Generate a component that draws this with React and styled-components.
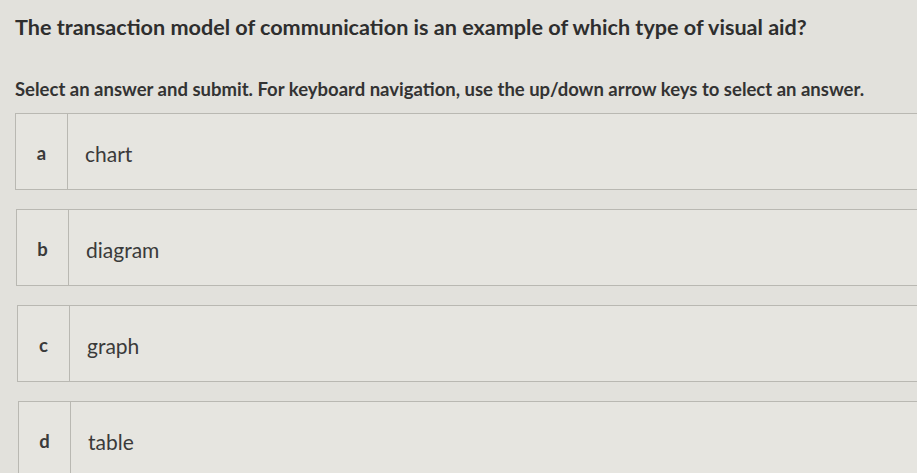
import React from 'react';
import styled, { createGlobalStyle } from 'styled-components';

const GlobalStyle = createGlobalStyle`
  html, body {
    margin: 0;
    padding: 0;
    overflow: hidden;
    background: #e2e1dc;
    font-family: Lato, 'Open Sans', sans-serif;
    color: #3a3a3a;
  }
`;

const Page = styled.div`
  padding: 14px 0 0 15px;
  width: 917px;
  height: 473px;
  box-sizing: border-box;
  overflow: hidden;
`;

const Question = styled.h1`
  margin: 0;
  font-size: 21.6px;
  font-weight: 700;
  line-height: 26px;
  color: #2e2e2e;
`;

const Hint = styled.p`
  margin: 38px 0 0;
  font-size: 18.5px;
  font-weight: 700;
  line-height: 22px;
  color: #333;
`;

const Options = styled.div`
  margin-top: 13px;
  margin-right: -30px;
  display: flex;
  flex-direction: column;
  gap: 19px;
`;

const Option = styled.div`
  display: flex;
  height: 77px;
  border: 1.5px solid #b9b8b2;
  background: #e6e5e0;
  box-sizing: border-box;
  margin-left: ${p => p.$shift}px;
`;

const Letter = styled.div`
  width: 51px;
  flex-shrink: 0;
  display: flex;
  align-items: center;
  justify-content: center;
  border-right: 1.5px solid #b9b8b2;
  font-size: 18.5px;
  font-weight: 700;
  color: #3a3a3a;
  padding-top: 3px;
`;

const Label = styled.div`
  display: flex;
  align-items: center;
  padding: 3px 0 0 17px;
  font-size: 21px;
  color: #3a3a3a;
`;

const answers = [
  { key: 'a', text: 'chart' },
  { key: 'b', text: 'diagram' },
  { key: 'c', text: 'graph' },
  { key: 'd', text: 'table' },
];

export default function App() {
  return (
    <Page>
      <GlobalStyle />
      <Question>The transaction model of communication is an example of which type of visual aid?</Question>
      <Hint>Select an answer and submit. For keyboard navigation, use the up/down arrow keys to select an answer.</Hint>
      <Options>
        {answers.map((a, i) => (
          <Option key={a.key} $shift={i}>
            <Letter>{a.key}</Letter>
            <Label>{a.text}</Label>
          </Option>
        ))}
      </Options>
    </Page>
  );
}
